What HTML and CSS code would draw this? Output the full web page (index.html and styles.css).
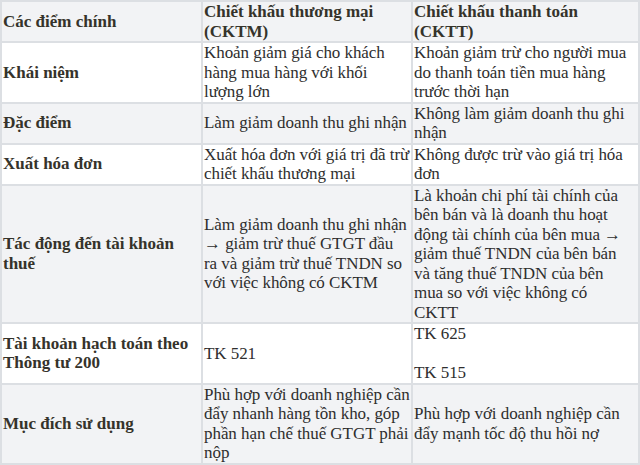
FILE: index.html
```html
<!DOCTYPE html>
<html lang="vi">
<head>
<meta charset="utf-8">
<title>So sánh chiết khấu</title>
<link rel="stylesheet" href="styles.css">
</head>
<body>
<table class="compare">
  <colgroup>
    <col class="c1">
    <col class="c2">
    <col class="c3">
  </colgroup>
  <tr class="row-alt head">
    <td class="key">Các điểm chính</td>
    <td class="key">Chiết khấu thương mại (CKTM)</td>
    <td class="key">Chiết khấu thanh toán (CKTT)</td>
  </tr>
  <tr class="row">
    <td class="key">Khái niệm</td>
    <td>Khoản giảm giá cho khách hàng mua hàng với khối lượng lớn</td>
    <td>Khoản giảm trừ cho người mua do thanh toán tiền mua hàng trước thời hạn</td>
  </tr>
  <tr class="row-alt">
    <td class="key">Đặc điểm</td>
    <td>Làm giảm doanh thu ghi nhận</td>
    <td>Không làm giảm doanh thu ghi nhận</td>
  </tr>
  <tr class="row">
    <td class="key">Xuất hóa đơn</td>
    <td>Xuất hóa đơn với giá trị đã trừ chiết khấu thương mại</td>
    <td>Không được trừ vào giá trị hóa đơn</td>
  </tr>
  <tr class="row-alt">
    <td class="key">Tác động đến tài khoản thuế</td>
    <td>Làm giảm doanh thu ghi nhận → giảm trừ thuế GTGT đầu ra và giảm trừ thuế TNDN so với việc không có CKTM</td>
    <td>Là khoản chi phí tài chính của bên bán và là doanh thu hoạt động tài chính của bên <span class="keep">mua →</span> giảm thuế TNDN của bên bán và tăng thuế TNDN của bên mua so với việc không có CKTT</td>
  </tr>
  <tr class="row">
    <td class="key">Tài khoản hạch toán theo Thông tư 200</td>
    <td>TK 521</td>
    <td>TK 625<br><br>TK 515</td>
  </tr>
  <tr class="row-alt">
    <td class="key">Mục đích sử dụng</td>
    <td>Phù hợp với doanh nghiệp cần đẩy nhanh hàng tồn kho, góp phần hạn chế thuế GTGT phải nộp</td>
    <td>Phù hợp với doanh nghiệp cần đẩy mạnh tốc độ thu hồi nợ</td>
  </tr>
</table>
</body>
</html>
```
FILE: styles.css
```css
html, body {
  margin: 0;
  padding: 0;
  background: #ffffff;
}

.compare {
  width: 640px;
  border-collapse: separate;
  border-spacing: 2px;
  background: #dcdfe3;
  font-family: "Liberation Serif", "Times New Roman", serif;
  font-size: 17px;
  line-height: 19.5px;
  letter-spacing: -0.06px;
  color: #2e2e2e;
  table-layout: fixed;
}

.compare .c1 { width: 199px; }
.compare .c2 { width: 208px; }
.compare .c3 { width: 225px; }

.compare td {
  padding: 0 1px;
  vertical-align: middle;
  text-align: left;
}

.compare td:last-child {
  padding-right: 7px;
}

.row td { background: #ffffff; }
.row-alt td { background: #f2f3f5; }

.key {
  font-weight: bold;
  color: #35332b;
  letter-spacing: 0;
}

.keep {
  white-space: nowrap;
}
```
